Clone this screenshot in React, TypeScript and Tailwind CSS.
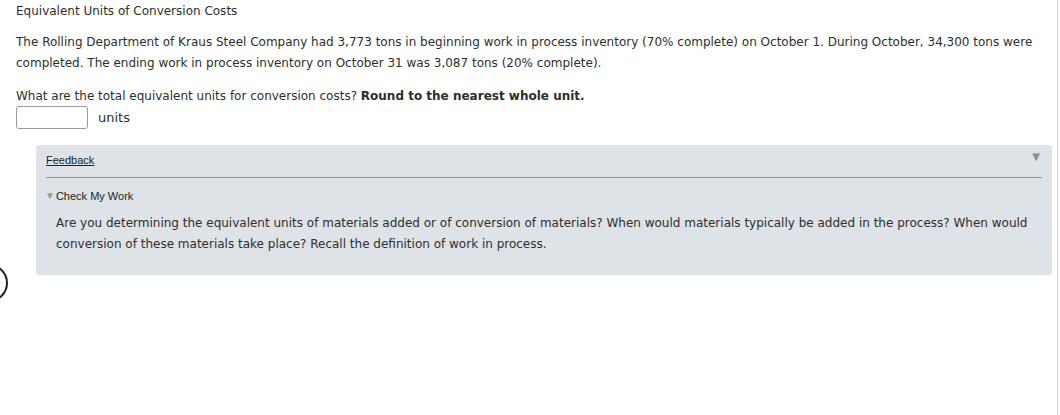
export default function App() {
  return (
    <div className="relative h-[415px] w-[1060px] overflow-hidden bg-white font-['DejaVu_Sans',Verdana,sans-serif] text-[12px] text-[#2e2e2e]">
      <div className="flex h-full">
        <div className="w-[1057px] pl-4 pr-3 pt-[2px]">
          <div className="leading-[18px]">Equivalent Units of Conversion Costs</div>
          <p className="mt-[12px] leading-[21px]">
            The Rolling Department of Kraus Steel Company had 3,773 tons in beginning work in process inventory (70% complete) on October 1. During October, 34,300 tons were completed. The ending work in process inventory on October 31 was 3,087 tons (20% complete).
          </p>
          <p className="mt-[12px] leading-[20px]">
            What are the total equivalent units for conversion costs? <b>Round to the nearest whole unit.</b>
          </p>
          <div className="flex items-center gap-[10px]">
            <div className="h-[23px] w-[72px] rounded-[3px] border border-[#999] bg-white" />
            <span className="text-[13px]">units</span>
          </div>
          <div className="ml-5 mr-[-7px] mt-[16px] rounded-[3px] bg-[#dde3e6] px-[10px] pb-[20px] pt-[8px]">
            <div className="flex items-start justify-between border-b border-[#8f979b] pb-[10px]">
              <span className="font-['Liberation_Sans',Arial,sans-serif] text-[11px] leading-[14px] text-[#222] underline">Feedback</span>
              <span className="mr-[2px] mt-[-2px] text-[10px] leading-[12px] text-[#8b8f92]">▼</span>
            </div>
            <div className="mt-[11px] flex items-center font-['Liberation_Sans',Arial,sans-serif] text-[11px] leading-[14px] text-[#222]">
              <span className="ml-[-1px] mr-[1px] text-[10px] leading-[12px] text-[#9a9a9a]">▼</span>
              Check My Work
            </div>
            <p className="mt-[10px] pl-[10px] pr-2 leading-[21px]">
              Are you determining the equivalent units of materials added or of conversion of materials? When would materials typically be added in the process? When would conversion of these materials take place? Recall the definition of work in process.
            </p>
          </div>
        </div>
        <div className="w-[1px] bg-[#d6d6d6]" />
      </div>
      <div className="absolute left-[-30px] top-[264px] h-[38px] w-[38px] rounded-full border-2 border-[#222]" />
    </div>
  );
}
